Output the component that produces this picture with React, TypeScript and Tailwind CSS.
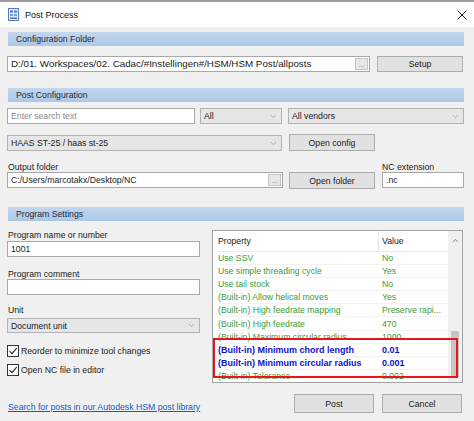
import { ChevronDown, ChevronUp } from 'lucide-react';

const FONT = "'Liberation Sans', Arial, sans-serif";

const Header = ({ title }: { title: string }) => (
  <div className="h-[14px] bg-gradient-to-b from-[#c3d7ee] to-[#acc7e6] pl-[8px] flex items-center text-[#1b2a3c]">
    {title}
  </div>
);

const Btn = ({ label, className = '' }: { label: string; className?: string }) => (
  <div className={`h-[17px] bg-[#e1e1e1] border border-[#adadad] flex items-center justify-center text-[#1a1a1a] ${className}`}>
    {label}
  </div>
);

const Select = ({ label, className = '' }: { label: string; className?: string }) => (
  <div className={`h-[16px] bg-[#e6e6e6] border border-[#b3b3b3] flex items-center justify-between pl-[3px] pr-[3px] ${className}`}>
    <span>{label}</span>
    <ChevronDown size={9} strokeWidth={1.5} className="text-[#808080]" />
  </div>
);

const Input = ({ value = '', placeholder = '', browse = false, className = '', textClass = '' }: { value?: string; placeholder?: string; browse?: boolean; className?: string; textClass?: string }) => (
  <div className={`h-[16px] bg-white border border-[#a8a8a8] flex items-center justify-between pl-[3px] pr-[1px] ${className}`}>
    <span className={`${placeholder ? 'text-[#8a8a8a]' : ''} ${textClass}`}>{value || placeholder}</span>
    {browse && (
      <div className="w-[13px] h-[12px] bg-[#e8e8e8] border border-[#c4c4c4] flex items-end justify-center text-[7px] leading-[8px] text-[#666]">...</div>
    )}
  </div>
);

const Check = ({ label }: { label: string }) => (
  <div className="flex items-center gap-[2px] h-[12px]">
    <div className="w-[12px] h-[12px] bg-white border border-[#333] flex items-center justify-center">
      <svg width="10" height="10" viewBox="0 0 10 10"><path d="M1.5 5.2 L4 7.6 L8.7 2.2" fill="none" stroke="#222" strokeWidth="1.1" /></svg>
    </div>
    <span>{label}</span>
  </div>
);

const ROWS: { name: string; value: string; bold?: boolean }[] = [
  { name: 'Use SSV', value: 'No' },
  { name: 'Use simple threading cycle', value: 'Yes' },
  { name: 'Use tail stock', value: 'No' },
  { name: '(Built-in) Allow helical moves', value: 'Yes' },
  { name: '(Built-in) High feedrate mapping', value: 'Preserve rapi...' },
  { name: '(Built-in) High feedrate', value: '470' },
  { name: '(Built-in) Maximum circular radius', value: '1000' },
  { name: '(Built-in) Minimum chord length', value: '0.01', bold: true },
  { name: '(Built-in) Minimum circular radius', value: '0.001', bold: true },
  { name: '(Built-in) Tolerance', value: '0.002' },
];

const PropertyGrid = () => (
  <div className="relative w-[251px] h-[153px] bg-white border border-[#a3a3a3] flex overflow-hidden">
    <div className="flex-1 flex flex-col pl-[5px]">
      <div className="h-[21px] shrink-0 flex items-center border-b border-[#ececec] text-[#222]">
        <div className="w-[160px]">Property</div>
        <div className="h-[21px] border-l border-[#e5e5e5]"></div>
        <div className="pl-[3px]">Value</div>
      </div>
      {ROWS.map(r => (
        <div
          key={r.name}
          className={`h-[13.1px] shrink-0 flex items-center border-b border-[#f2f2f2] ${r.bold ? 'text-[#1010c8] font-bold text-[9px]' : 'text-[#3d9b3d]'}`}
        >
          <div className="w-[164px] whitespace-nowrap overflow-hidden">{r.name}</div>
          <div className="whitespace-nowrap">{r.value}</div>
        </div>
      ))}
    </div>
    <div className="w-[14px] bg-[#f0f0f0] flex flex-col items-center">
      <ChevronUp size={9} strokeWidth={2} className="text-[#606060] mt-[5px]" />
      <div className="w-[8px] h-[46px] bg-[#c6c6c6] mt-[86px]"></div>
    </div>
    <div className="absolute left-0 top-[107px] w-[245px] h-[40px] border-2 border-[#e8141e]"></div>
  </div>
);

export default function App() {
  return (
    <div className="w-[474px] h-[421px] bg-[#f0f0f0] overflow-hidden flex flex-col text-[8.7px] leading-[10px] text-[#1a1a1a]" style={{ fontFamily: FONT }}>
      <div className="h-[27px] shrink-0 bg-white border-t-2 border-[#9c9c9c] flex items-center pl-[8px] pr-[7px]">
        <svg width="11" height="13" viewBox="0 0 11 13" className="mr-[6px]">
          <rect x="0.5" y="0.5" width="10" height="12" fill="#dfe9f7" stroke="#5a7fb8" />
          <rect x="2" y="2.5" width="3" height="2" fill="#4c79c0" />
          <rect x="6" y="2.5" width="3" height="2" fill="#4c79c0" />
          <rect x="2" y="6" width="3" height="2" fill="#7da0d6" />
          <rect x="6" y="6" width="3" height="2" fill="#7da0d6" />
          <rect x="2" y="9.5" width="7" height="1.5" fill="#4c79c0" />
        </svg>
        <span className="text-[9px] text-[#111]">Post Process</span>
        <svg width="10" height="10" viewBox="0 0 10 10" className="ml-auto">
          <path d="M0.5 0.5 L9.5 9.5 M9.5 0.5 L0.5 9.5" stroke="#222" strokeWidth="1" />
        </svg>
      </div>

      <div className="flex flex-col pl-[7px] pr-[10px]">
        <div className="mt-[5px] pl-[1px]"><Header title="Configuration Folder" /></div>
        <div className="mt-[10px] flex items-start gap-[7px]">
          <Input value="D:/01. Workspaces/02. Cadac/#Instellingen#/HSM/HSM Post/allposts" browse className="w-[363px]" textClass="text-[9.8px]" />
          <Btn label="Setup" className="w-[86px] !h-[16px]" />
        </div>

        <div className="mt-[16px] pl-[1px]"><Header title="Post Configuration" /></div>
        <div className="mt-[6px] flex gap-[5px]">
          <Input placeholder="Enter search text" className="w-[188px]" />
          <Select label="All" className="w-[82px]" />
          <Select label="All vendors" className="w-[176px] ml-[1px]" />
        </div>
        <div className="mt-[11px] h-[16px] flex items-start gap-[7px]">
          <Select label="HAAS ST-25 / haas st-25" className="w-[275px]" />
          <Btn label="Open config" className="w-[86px] -mt-[1px]" />
        </div>
        <div className="mt-[11px] h-[10px] flex">
          <span className="w-[375px] pl-[1px]">Output folder</span>
          <span>NC extension</span>
        </div>
        <div className="flex items-start gap-[6px]">
          <Input value="C:/Users/marcotakx/Desktop/NC" browse className="w-[276px]" />
          <Btn label="Open folder" className="w-[86px]" />
          <Input value=".nc" className="w-[82px] ml-[1px]" />
        </div>

        <div className="mt-[18px] pl-[1px]"><Header title="Program Settings" /></div>
        <div className="flex items-start">
          <div className="w-[193px] flex flex-col">
            <span className="mt-[9px] pl-[1px] h-[10px]">Program name or number</span>
            <Input value="1001" className="mt-[1px]" />
            <span className="mt-[12px] pl-[1px] h-[10px]">Program comment</span>
            <Input />
            <span className="mt-[10px] pl-[1px] h-[10px]">Unit</span>
            <Select label="Document unit" className="mt-[3px] !h-[15px]" />
            <div className="mt-[12px]"><Check label="Reorder to minimize tool changes" /></div>
            <div className="mt-[7px]"><Check label="Open NC file in editor" /></div>
          </div>
          <div className="ml-[12px] mt-[9px]"><PropertyGrid /></div>
        </div>
        <div className="mt-[11px] flex items-start">
          <span className="pl-[1px] text-[#0a5bd0] underline mt-[8px]">Search for posts in our Autodesk HSM post library</span>
          <Btn label="Post" className="ml-auto w-[80px] !h-[19px]" />
          <Btn label="Cancel" className="ml-[8px] mr-[2px] w-[80px] !h-[19px]" />
        </div>
      </div>
    </div>
  );
}
